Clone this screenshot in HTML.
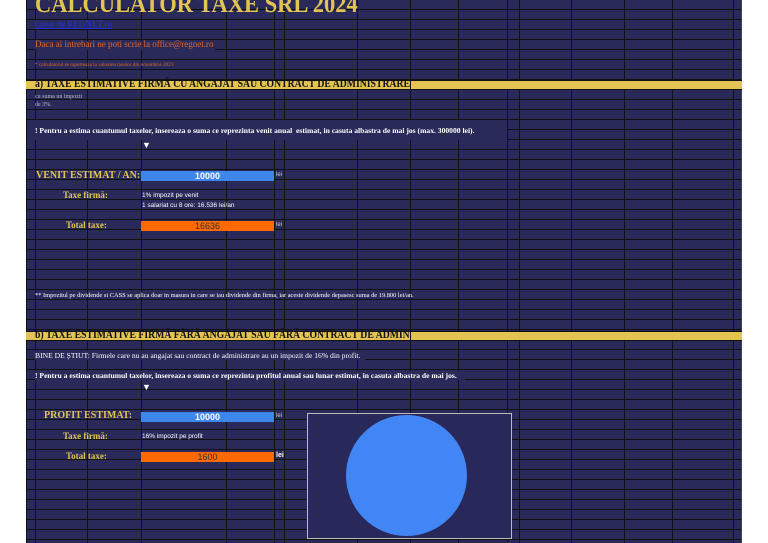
<!DOCTYPE html>
<html><head><meta charset="utf-8"><style>
*{margin:0;padding:0;box-sizing:border-box}
body{width:768px;height:543px;background:#fff;position:relative;overflow:hidden;font-family:"Liberation Serif",serif}
#sheet{position:absolute;left:26px;top:0;width:716px;height:543px;background:#292a5a;
background-image:repeating-linear-gradient(to bottom,transparent 0,transparent 9px,#111 9px,#111 10px);border-left:1px solid #111;border-right:1px solid #444}
.v{position:absolute;top:0;width:1px;height:543px;background:#111}
.a{position:absolute;white-space:nowrap;transform-origin:left top}
.mask{position:absolute;background:#292a5a}
.band{position:absolute;left:26px;width:716px;height:10px;background:#e3c452;border-top:1px solid #111;border-bottom:1px solid #111}
.y{color:#e3c452;font-weight:bold}
.w{color:#fff}
.box{position:absolute;left:141px;width:133px;height:10px;text-align:center;font-family:"Liberation Sans",sans-serif;font-size:9px;line-height:10px;font-weight:bold}
.s{font-family:"Liberation Sans",sans-serif;font-size:6.5px;color:#fff}
.lei{position:absolute;left:276px;font-size:6px;color:#ccc;font-family:'Liberation Sans',sans-serif}
</style></head><body>
<div id="sheet"></div>
<div class="v" style="left:35px"></div><div class="v" style="left:87px"></div><div class="v" style="left:141px"></div><div class="v" style="left:226px"></div><div class="v" style="left:274px"></div><div class="v" style="left:284px"></div><div class="v" style="left:357px"></div><div class="v" style="left:410px"></div><div class="v" style="left:458px"></div><div class="v" style="left:507px"></div><div class="v" style="left:519px"></div><div class="v" style="left:571px"></div><div class="v" style="left:624px"></div><div class="v" style="left:672px"></div><div class="v" style="left:733px"></div>

<div class="mask" style="left:35px;top:0;width:322px;height:9px"></div>
<div class="a y" style="left:35px;top:-9px;font-size:25px;transform:scaleX(0.9)">CALCULATOR TAXE SRL 2024</div>
<div class="mask" style="left:35px;top:20px;width:105px;height:9px"></div>
<div class="a" style="left:35px;top:19px;font-size:9px;color:#2233dd;text-decoration:underline">Creat de REGNET.ro</div>
<div class="mask" style="left:35px;top:41px;width:180px;height:9px"></div>
<div class="a" style="left:35px;top:39px;font-size:9px;color:#e0662a">Daca ai intrebari ne poti scrie la office@regnet.ro</div>
<div class="a" style="left:35px;top:62px;font-size:5.2px;color:#e0662a">* calculatorul se raporteaza la valoarea taxelor din noiembrie 2023</div>

<div class="band" style="top:80px"></div>
<div class="v" style="left:410px;top:80px;height:11px"></div>
<div class="a" style="left:35px;top:78px;font-size:11.5px;font-weight:bold;color:#111;transform:scaleX(0.845)">a) TAXE ESTIMATIVE FIRMĂ CU ANGAJAT SAU CONTRACT DE ADMINISTRARE</div>
<div class="a" style="left:35px;top:94px;font-size:6px;color:#bbb">cu suma un impozit</div>
<div class="a" style="left:35px;top:102px;font-size:6px;color:#bbb">de 3%.</div>

<div class="mask" style="left:27px;top:120px;width:480px;height:20px"></div>
<div class="a w" style="left:35px;top:126px;font-size:7.6px;font-weight:bold">! Pentru a estima cuantumul taxelor, insereaza o suma ce reprezinta venit anual&nbsp; estimat, in casuta albastra de mai jos (max. 300000 lei).</div>
<div class="a w" style="left:142px;top:140px;font-size:9px">▼</div>

<div class="a y" style="left:36px;top:170px;font-size:10px">VENIT ESTIMAT / AN:</div>
<div class="box" style="top:171px;background:#3d86ea;color:#fff">10000</div>
<div class="lei" style="top:172px">lei</div>
<div class="a y" style="left:63px;top:190px;font-size:9px">Taxe firmă:</div>
<div class="a s" style="left:142px;top:192px">1% impozit pe venit</div>
<div class="a s" style="left:142px;top:202px">1 salariat cu 8 ore: 16.536 lei/an</div>
<div class="a y" style="left:66px;top:220px;font-size:9px">Total taxe:</div>
<div class="box" style="top:221px;background:#ff6a00;color:#333;font-weight:normal">16636</div>
<div class="lei" style="top:222px">lei</div>

<div class="a w" style="left:35px;top:292px;font-size:6.4px">** Impozitul pe dividende si CASS se aplica doar in masura in care se iau dividende din firma, iar aceste dividende depasesc suma de 19.800 lei/an.</div>

<div class="band" style="top:331px"></div>
<div class="v" style="left:410px;top:331px;height:11px"></div>
<div class="a" style="left:35px;top:329px;font-size:11.5px;font-weight:bold;color:#111;transform:scaleX(0.845)">b) TAXE ESTIMATIVE FIRMĂ FĂRĂ ANGAJAT SAU FĂRĂ CONTRACT DE ADMIN</div>

<div class="mask" style="left:35px;top:351px;width:330px;height:9px"></div>
<div class="a w" style="left:35px;top:351px;font-size:7.6px">BINE DE ȘTIUT: Firmele care nu au angajat sau contract de administrare au un impozit de 16% din profit.</div>
<div class="mask" style="left:35px;top:371px;width:430px;height:9px"></div>
<div class="a w" style="left:35px;top:371px;font-size:7.6px;font-weight:bold">! Pentru a estima cuantumul taxelor, insereaza o suma ce reprezinta profitul anual sau lunar estimat, in casuta albastra de mai jos.</div>
<div class="a w" style="left:142px;top:382px;font-size:9px">▼</div>

<div class="a y" style="left:44px;top:410px;font-size:10px">PROFIT ESTIMAT:</div>
<div class="box" style="top:412px;background:#3d86ea;color:#fff">10000</div>
<div class="lei" style="top:413px">lei</div>
<div class="a y" style="left:63px;top:431px;font-size:9px">Taxe firmă:</div>
<div class="a s" style="left:142px;top:433px">16% impozit pe profit</div>
<div class="a y" style="left:66px;top:451px;font-size:9px">Total taxe:</div>
<div class="box" style="top:452px;background:#ff6a00;color:#333;font-weight:normal">1600</div>
<div class="a w" style="left:276px;top:452px;font-size:7px;font-family:'Liberation Sans',sans-serif;font-weight:bold">lei</div>

<div style="position:absolute;left:307px;top:413px;width:205px;height:126px;background:#28285a;border:1px solid #bbb"></div>
<div style="position:absolute;left:346px;top:415px;width:121px;height:121px;border-radius:50%;background:#4285f4"></div>
</body></html>
